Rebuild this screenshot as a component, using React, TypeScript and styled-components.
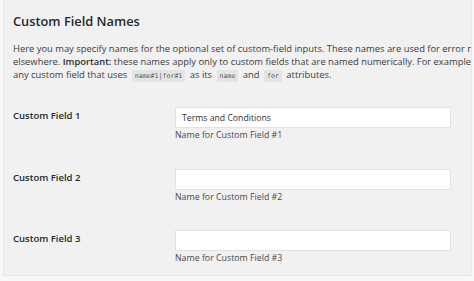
import React from 'react';
import styled, { createGlobalStyle } from 'styled-components';

const GlobalStyle = createGlobalStyle`
  html, body {
    margin: 0;
    padding: 0;
    background: #f8f8f8;
    overflow: hidden;
  }
  body {
    font-family: 'Open Sans', 'Liberation Sans', sans-serif;
    color: #444;
  }
`;

const Panel = styled.div`
  margin-left: 3px;
  width: 469px;
  height: 276px;
  box-sizing: border-box;
  background: #f1f1f1;
  border-left: 1px solid #e8e8e8;
  border-right: 1px solid #e8e8e8;
  border-bottom: 1px solid #e6e6e6;
  padding: 12px 0 0 9px;
  overflow: hidden;
`;

const Title = styled.h2`
  margin: 0;
  font-size: 12.8px;
  line-height: 18px;
  font-weight: 600;
  color: #23282d;
`;

const Intro = styled.p`
  margin: 12px 0 0;
  font-size: 9.4px;
  line-height: 13px;
  white-space: nowrap;
  color: #3c3c3c;

  strong {
    font-weight: 600;
    color: #2a2a2a;
  }
`;

const Code = styled.code`
  font-family: 'DejaVu Sans Mono', 'Liberation Mono', monospace;
  font-size: 6.6px;
  background: #e4e4e4;
  padding: 2px 3px;
  margin: 0 2px;
  color: #555;
`;

const FieldTable = styled.div`
  margin-top: 24px;
  display: flex;
  flex-direction: column;
`;

const FieldRow = styled.div`
  display: grid;
  grid-template-columns: 162px 276px;
  padding-bottom: 26.5px;
`;

const FieldLabel = styled.label`
  font-size: 9.5px;
  line-height: 13px;
  font-weight: 600;
  color: #23282d;
  padding-top: 2px;
`;

const FieldCell = styled.div`
  display: flex;
  flex-direction: column;
`;

const TextInput = styled.input`
  box-sizing: border-box;
  width: 100%;
  height: 21px;
  margin: 0;
  padding: 0 6px;
  border: 1px solid #e2e2e2;
  background: #fff;
  font-family: 'Open Sans', 'Liberation Sans', sans-serif;
  font-size: 8.7px;
  color: #333;
  outline: none;
`;

const Hint = styled.span`
  font-size: 8.8px;
  line-height: 13px;
  margin-top: 1px;
  color: #4a4a4a;
`;

const fields = [
  { n: 1, value: 'Terms and Conditions' },
  { n: 2, value: '' },
  { n: 3, value: '' },
];

export default function App() {
  return (
    <>
      <GlobalStyle />
      <Panel>
        <Title>Custom Field Names</Title>
        <Intro>
          Here you may specify names for the optional set of custom-field inputs. These names are used for error messages,
          <br />
          elsewhere. <strong>Important:</strong> these names apply only to custom fields that are named numerically. For example,
          <br />
          any custom field that uses <Code>name#1|for#1</Code> as its <Code>name</Code> and <Code>for</Code> attributes.
        </Intro>
        <FieldTable>
          {fields.map((f) => (
            <FieldRow key={f.n}>
              <FieldLabel htmlFor={`cf-${f.n}`}>Custom Field {f.n}</FieldLabel>
              <FieldCell>
                <TextInput id={`cf-${f.n}`} type="text" defaultValue={f.value} />
                <Hint>Name for Custom Field #{f.n}</Hint>
              </FieldCell>
            </FieldRow>
          ))}
        </FieldTable>
      </Panel>
    </>
  );
}
